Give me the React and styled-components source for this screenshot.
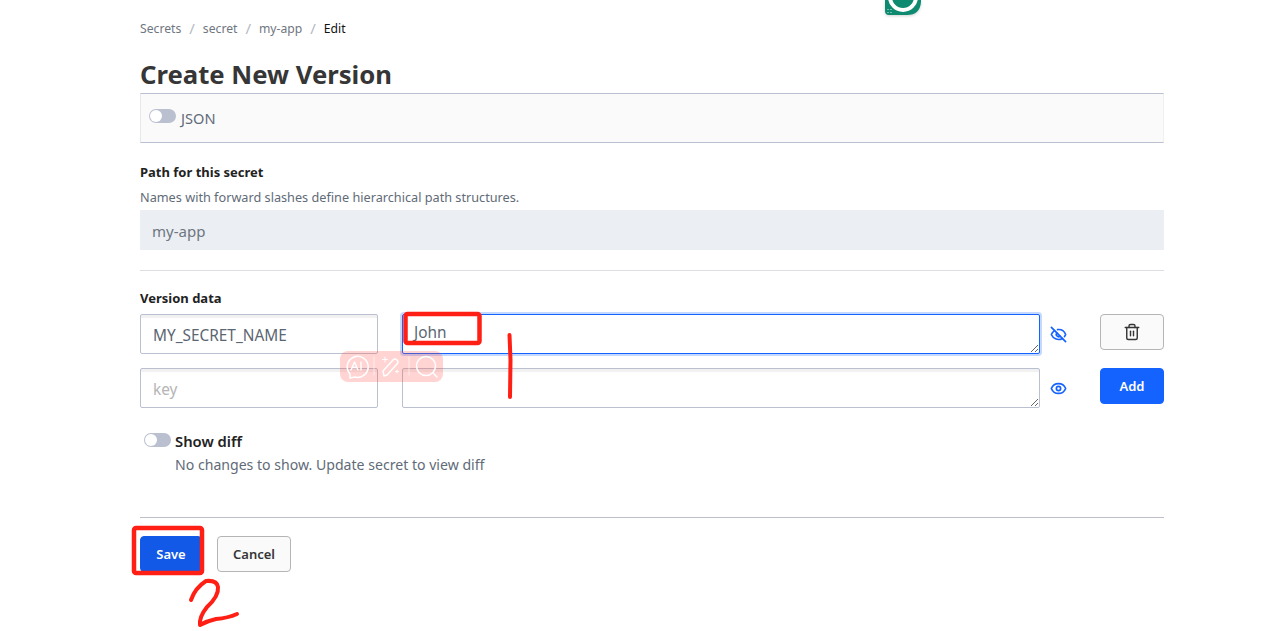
import React from "react";
import styled, { createGlobalStyle } from "styled-components";
import { Eye, EyeOff, Trash2 } from "lucide-react";

const Global = createGlobalStyle`
  html, body { margin: 0; padding: 0; background: #fff; overflow: hidden; }
  body { font-family: "Noto Sans", "Open Sans", sans-serif; color: #363636; }
`;

const Page = styled.main`
  width: 1024px;
  height: 631px;
  margin-left: 140px;
  padding-top: 19px;
  box-sizing: border-box;
`;

const Crumbs = styled.nav`
  display: flex;
  align-items: center;
  height: 18px;
  font-size: 12.2px;
  color: #6f7680;
`;
const Crumb = styled.span`
  color: ${(p) => (p.$current ? "#111" : "#6f7680")};
`;
const Slash = styled.span`
  width: 21.5px;
  text-align: center;
  color: #b5b9c4;
  font-size: 15px;
`;

const Title = styled.h1`
  margin: 18px 0 0;
  height: 38px;
  font-size: 25.7px;
  line-height: 40px;
  font-weight: 700;
  color: #363636;
`;

const JsonBar = styled.div`
  display: flex;
  align-items: center;
  height: 50px;
  box-sizing: border-box;
  padding: 0 8px;
  background: #fbfafb;
  border-top: 1px solid #bac0cf;
  border-bottom: 1px solid #bac0cf;
  border-left: 1px solid #e6e7ea;
  border-right: 1px solid #f0f0f2;
  font-size: 14.6px;
  color: #5f6b78;
  gap: 5px;
`;

const Toggle = styled.span`
  display: inline-block;
  position: relative;
  flex: none;
  width: 27px;
  height: 14px;
  border-radius: 7px;
  background: #bac0cf;
  margin-top: ${(p) => p.$top || 0}px;
  &::after {
    content: "";
    position: absolute;
    left: 1px;
    top: 1px;
    width: 12px;
    height: 12px;
    border-radius: 50%;
    background: #fff;
  }
`;
const JsonLabel = styled.span`
  line-height: 20px;
`;

const Label = styled.label`
  display: block;
  font-size: 13px;
  line-height: 18px;
  font-weight: 700;
  color: #222;
  margin-top: ${(p) => p.$top}px;
`;
const Help = styled.p`
  margin: 7px 0 0;
  font-size: 12.7px;
  line-height: 18px;
  color: #5f6b78;
`;
const PathField = styled.div`
  margin-top: 4px;
  height: 40px;
  box-sizing: border-box;
  padding: 2px 12px 0;
  background: #ebeef2;
  display: flex;
  align-items: center;
  font-size: 15px;
  color: #6d7681;
`;
const Rule = styled.hr`
  margin: ${(p) => p.$top}px 0 0;
  border: 0;
  border-top: 1px solid ${(p) => p.$color || "#dcdee3"};
`;

const Rows = styled.div`
  display: flex;
  flex-direction: column;
  gap: 14px;
  margin-top: 7px;
`;
const Row = styled.div`
  display: flex;
  align-items: flex-start;
`;
const KeyInput = styled.input`
  flex: none;
  box-sizing: border-box;
  width: 238px;
  height: 40px;
  margin: 0 24px 0 0;
  padding: 2px 12px 0;
  border: 1px solid #bac0cf;
  border-radius: 2px;
  box-shadow: inset 0 4px 1px -1px #f1f1f2;
  font: 15.4px "Noto Sans", sans-serif;
  color: #5a6672;
  outline: none;
  &::placeholder { color: #b5b5b5; opacity: 1; }
`;
const ValueInput = styled.textarea`
  flex: none;
  display: block;
  box-sizing: border-box;
  width: 638px;
  height: 40px;
  margin: 0;
  padding: 7px 11px;
  border: 1px solid ${(p) => (p.$focused ? "#1563ff" : "#bac0cf")};
  border-radius: 2px;
  box-shadow: ${(p) =>
    p.$focused ? "0 0 0 2px #c5d9ff" : "inset 0 4px 1px -1px #f1f1f2"};
  font: 15.4px/22px "Noto Sans", sans-serif;
  color: #5a6672;
  outline: none;
  resize: vertical;
`;
const EyeSlot = styled.span`
  flex: none;
  width: 36px;
  height: 40px;
  display: flex;
  align-items: center;
  justify-content: center;
  color: #1563ff;
  margin-right: 24px;
`;

const Button = styled.button`
  box-sizing: border-box;
  height: 36px;
  width: ${(p) => p.$w}px;
  margin: 0;
  padding: 0;
  display: flex;
  align-items: center;
  justify-content: center;
  border-radius: 4px;
  border: 1px solid ${(p) => (p.$primary ? p.$primary : "#b5b5b5")};
  background: ${(p) => p.$primary || "#fafafa"};
  color: ${(p) => (p.$primary ? "#fff" : "#363636")};
  font: 600 13px "Noto Sans", sans-serif;
`;

const DiffBlock = styled.div`
  display: grid;
  grid-template-columns: 27px auto;
  column-gap: 4px;
  row-gap: 4px;
  margin: 23px 0 0 4px;
  align-items: center;
`;
const DiffTitle = styled.span`
  font-size: 14.8px;
  line-height: 20px;
  font-weight: 600;
  color: #222;
`;
const DiffNote = styled.span`
  grid-column: 2;
  font-size: 14.1px;
  line-height: 20px;
  color: #5f6b78;
`;

const Actions = styled.div`
  display: flex;
  gap: 15px;
  margin-top: 18px;
`;

const Overlay = styled.svg`
  position: absolute;
  left: 0;
  top: 0;
  width: 1272px;
  height: 631px;
  pointer-events: none;
`;

const RED = "#ff1f14";

export default function App() {
  return (
    <>
      <Global />
      <Page>
        <Crumbs>
          <Crumb>Secrets</Crumb>
          <Slash>/</Slash>
          <Crumb>secret</Crumb>
          <Slash>/</Slash>
          <Crumb>my-app</Crumb>
          <Slash>/</Slash>
          <Crumb $current>Edit</Crumb>
        </Crumbs>
        <Title>Create New Version</Title>
        <JsonBar>
          <Toggle $top={-4} />
          <JsonLabel>JSON</JsonLabel>
        </JsonBar>
        <Label $top={20}>Path for this secret</Label>
        <Help>Names with forward slashes define hierarchical path structures.</Help>
        <PathField>my-app</PathField>
        <Rule $top={20} />
        <Label $top={18}>Version data</Label>
        <Rows>
          <Row>
            <KeyInput defaultValue="MY_SECRET_NAME" readOnly />
            <ValueInput $focused defaultValue="John" readOnly />
            <EyeSlot><EyeOff size={17} strokeWidth={2.4} /></EyeSlot>
            <Button $w={64} aria-label="Delete"><Trash2 size={18} strokeWidth={1.9} /></Button>
          </Row>
          <Row>
            <KeyInput placeholder="key" readOnly />
            <ValueInput readOnly />
            <EyeSlot><Eye size={17} strokeWidth={2.4} /></EyeSlot>
            <Button $w={64} $primary="#1563ff">Add</Button>
          </Row>
        </Rows>
        <DiffBlock>
          <Toggle $top={-3} />
          <DiffTitle>Show diff</DiffTitle>
          <DiffNote>No changes to show. Update secret to view diff</DiffNote>
        </DiffBlock>
        <Rule $top={42} $color="#bcbfc8" />
        <Actions>
          <Button $w={62} $primary="#1159e6">Save</Button>
          <Button $w={74}>Cancel</Button>
        </Actions>
      </Page>

      <Overlay viewBox="0 0 1272 631">
        <defs>
          <filter id="soft" x="-30%" y="-30%" width="160%" height="180%">
            <feDropShadow dx="0" dy="1" stdDeviation="1.5" floodColor="#000" floodOpacity="0.18" />
          </filter>
        </defs>
        {/* Grammarly-style badge clipped by the top of the window */}
        <path d="M885 0H921V2Q920 15 907 15H889Q885 15 885 11Z" fill="#0b8a6f" filter="url(#soft)" />
        <circle cx="903" cy="-3" r="13" fill="none" stroke="#fff" strokeWidth="4" />
        <path d="M888 9v1M891 9v1M888 12v1M891 12v1" stroke="#d5efe8" strokeWidth="1" />

        {/* floating translucent toolbar */}
        <rect x="340" y="351" width="103" height="31" rx="8" fill="#ff4a42" fillOpacity="0.24" />
        <g fill="none" stroke="#fff" strokeWidth="1.5" strokeLinecap="round" strokeLinejoin="round">
          <path d="M350 378 L350 374 A10.5 10.5 0 1 1 355 377 Z" />
          <path d="M374 357v18M409 357v18" strokeOpacity="0.6" strokeWidth="1" />
          <path d="M384 376l-1 -5 10 -11a2.6 2.6 0 0 1 4 4l-10 11z" />
          <path d="M385 357v5M382.5 359.5h5M397 370v3M395.5 371.5h3" strokeWidth="1" />
          <circle cx="426" cy="366" r="9.5" />
          <path d="M433 373l4 4" />
          <path d="M351 370l3.5 -8 3.5 8M352.4 367.500h4.200M361 362v8" strokeWidth="1.4" />
        </g>

        {/* red hand annotations */}
        <rect x="405.5" y="314" width="74" height="29" rx="2" fill="none" stroke={RED} strokeWidth="4.5" />
        <rect x="134" y="528" width="68" height="45" rx="2" fill="none" stroke={RED} strokeWidth="4.5" />
        <path d="M509.5 335 L510.5 360 L510 397" fill="none" stroke={RED} strokeWidth="4" strokeLinecap="round" />
        <path
          d="M191 600 Q195 588 206 581 Q217 580 218 587 Q219 596 207 607 Q199 617 200 625 Q207 621 216 619 Q228 618 237 614"
          fill="none"
          stroke={RED}
          strokeWidth="4"
          strokeLinecap="round"
          strokeLinejoin="round"
        />
      </Overlay>
    </>
  );
}
